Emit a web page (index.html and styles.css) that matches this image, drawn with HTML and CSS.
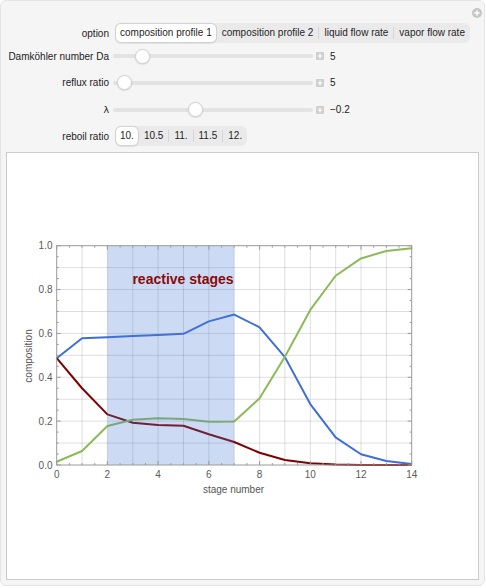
FILE: index.html
```html
<!DOCTYPE html>
<html>
<head>
<meta charset="utf-8">
<link rel="stylesheet" href="styles.css">
</head>
<body>
<div class="panel">
  <span class="corner-add"><svg width="10" height="10" viewBox="0 0 10 10"><circle cx="5" cy="5" r="5" fill="#c6c6c6"/><path d="M5 2.3v5.4M2.3 5h5.4" stroke="#fff" stroke-width="1.4"/></svg></span>
  <div class="controls">
    <div class="row row-option">
      <span class="label">option</span>
      <div class="seg">
        <span class="seg-item active">composition profile 1</span>
        <span class="seg-item">composition profile 2</span>
        <span class="sep"></span>
        <span class="seg-item">liquid flow rate</span>
        <span class="sep"></span>
        <span class="seg-item">vapor flow rate</span>
      </div>
    </div>
    <div class="row">
      <span class="label">Damköhler number Da</span>
      <div class="slider"><div class="track"></div><div class="thumb" style="left:21.5px"></div></div>
      <span class="plus"><svg width="8" height="8" viewBox="0 0 8 8"><rect width="8" height="8" rx="1" fill="#cfcfcf"/><path d="M4 1.6v4.8M1.6 4h4.8" stroke="#fff" stroke-width="1.2"/></svg></span>
      <span class="value">5</span>
    </div>
    <div class="row">
      <span class="label">reflux ratio</span>
      <div class="slider"><div class="track"></div><div class="thumb" style="left:3.5px"></div></div>
      <span class="plus"><svg width="8" height="8" viewBox="0 0 8 8"><rect width="8" height="8" rx="1" fill="#cfcfcf"/><path d="M4 1.6v4.8M1.6 4h4.8" stroke="#fff" stroke-width="1.2"/></svg></span>
      <span class="value">5</span>
    </div>
    <div class="row">
      <span class="label lambda">λ</span>
      <div class="slider"><div class="track"></div><div class="thumb" style="left:74.5px"></div></div>
      <span class="plus"><svg width="8" height="8" viewBox="0 0 8 8"><rect width="8" height="8" rx="1" fill="#cfcfcf"/><path d="M4 1.6v4.8M1.6 4h4.8" stroke="#fff" stroke-width="1.2"/></svg></span>
      <span class="value">−0.2</span>
    </div>
    <div class="row">
      <span class="label">reboil ratio</span>
      <div class="seg">
        <span class="seg-item active">10.</span>
        <span class="seg-item">10.5</span>
        <span class="sep"></span>
        <span class="seg-item">11.</span>
        <span class="sep"></span>
        <span class="seg-item">11.5</span>
        <span class="sep"></span>
        <span class="seg-item">12.</span>
      </div>
    </div>
  </div>
  <div class="plot">
    <svg class="chart" width="471" height="426" viewBox="7 153 471 426">
      <g class="grid">
        <path d="M82.06 245.7V465M107.4 245.7V465M132.8 245.7V465M158.1 245.7V465M183.5 245.7V465M208.9 245.7V465M234.2 245.7V465M259.6 245.7V465M284.9 245.7V465M310.3 245.7V465M335.7 245.7V465M361 245.7V465M386.4 245.7V465"/>
        <path d="M56.7 443.07H411.7M56.7 421.14H411.7M56.7 399.21H411.7M56.7 377.28H411.7M56.7 355.35H411.7M56.7 333.4H411.7M56.7 311.5H411.7M56.7 289.56H411.7M56.7 267.6H411.7"/>
      </g>
      <g class="curves" transform="translate(56.7 465) scale(25.357 -219.3)">
        <polyline class="c-blue" points="0,0.487 1,0.578 2,0.582 3,0.588 4,0.593 5,0.598 6,0.655 7,0.686 8,0.628 9,0.492 10,0.278 11,0.126 12,0.049 13,0.018 14,0.005"/>
        <polyline class="c-red" points="0,0.487 1,0.35 2,0.231 3,0.193 4,0.182 5,0.179 6,0.14 7,0.105 8,0.056 9,0.023 10,0.008 11,0.002 12,0 13,0 14,0"/>
        <polyline class="c-green" points="0,0.015 1,0.064 2,0.178 3,0.206 4,0.213 5,0.21 6,0.197 7,0.198 8,0.304 9,0.494 10,0.707 11,0.863 12,0.942 13,0.976 14,0.988"/>
      </g>
      <rect class="shade" x="107.4" y="245.7" width="126.8" height="219.3"/>
      <text class="annot" x="183" y="284" text-anchor="middle">reactive stages</text>
      <rect class="frame" x="56.7" y="245.7" width="355" height="219.3"/>
      <g class="ticks">
        <g id="yt">
          <path d="M56.7 465h4M56.7 421.14h4M56.7 377.28h4M56.7 333.4h4M56.7 289.56h4M56.7 245.7h4M56.7 454.04h2M56.7 443.07h2M56.7 432.1h2M56.7 410.18h2M56.7 399.21h2M56.7 388.25h2M56.7 366.3h2M56.7 355.35h2M56.7 344.4h2M56.7 322.45h2M56.7 311.5h2M56.7 300.5h2M56.7 278.6h2M56.7 267.6h2M56.7 256.7h2"/>
        </g>
        <use href="#yt" transform="translate(468.4 0) scale(-1 1)"/>
        <g id="xt">
          <path d="M56.7 465v-4M107.4 465v-4M158.1 465v-4M208.9 465v-4M259.6 465v-4M310.3 465v-4M361 465v-4M411.7 465v-4M69.4 465v-2M82.06 465v-2M94.74 465v-2M120.1 465v-2M132.8 465v-2M145.5 465v-2M170.8 465v-2M183.5 465v-2M196.2 465v-2M221.6 465v-2M234.2 465v-2M246.9 465v-2M272.3 465v-2M284.9 465v-2M297.6 465v-2M323 465v-2M335.7 465v-2M348.3 465v-2M373.7 465v-2M386.4 465v-2M399 465v-2"/>
        </g>
        <use href="#xt" transform="translate(0 710.7) scale(1 -1)"/>
      </g>
      <g class="ylabels">
        <text x="52.5" y="468.5">0.0</text>
        <text x="52.5" y="424.6">0.2</text>
        <text x="52.5" y="380.8">0.4</text>
        <text x="52.5" y="336.9">0.6</text>
        <text x="52.5" y="293">0.8</text>
        <text x="52.5" y="249.2">1.0</text>
      </g>
      <g class="xlabels">
        <text x="56.7" y="477.5">0</text>
        <text x="107.4" y="477.5">2</text>
        <text x="158.1" y="477.5">4</text>
        <text x="208.9" y="477.5">6</text>
        <text x="259.6" y="477.5">8</text>
        <text x="310.3" y="477.5">10</text>
        <text x="361" y="477.5">12</text>
        <text x="411.7" y="477.5">14</text>
      </g>
      <text class="axis-title" x="233.5" y="493" text-anchor="middle">stage number</text>
      <text class="axis-title" transform="translate(31.5 356) rotate(-90)" text-anchor="middle">composition</text>
    </svg>
  </div>
</div>
</body>
</html>
```
FILE: styles.css
```css
* { box-sizing: border-box; }

body {
  margin: 0;
  background: #ffffff;
  font-family: "Liberation Sans", Arial, sans-serif;
  font-size: 10px;
  color: #222;
}

.panel {
  position: relative;
  width: 485px;
  height: 586px;
  background: #f5f5f5;
  border: 1px solid #e4e4e4;
  border-radius: 6px;
}

.corner-add {
  position: absolute;
  left: 471px;
  top: 7px;
  width: 10px;
  height: 10px;
  display: block;
}
.corner-add svg { display: block; }

.controls {
  padding-top: 22px;
}

.row {
  display: flex;
  align-items: center;
  height: 26.67px;
}

.row-option {
  height: 20px;
}

.label {
  flex: none;
  width: 108px;
  text-align: right;
  color: #222;
  white-space: nowrap;
}

.lambda {
  font-family: "DejaVu Sans", "Liberation Sans", sans-serif;
  font-size: 9.5px;
}

.seg {
  margin-left: 6px;
  display: flex;
  align-items: center;
  height: 20px;
  background: #eaeaea;
  border-radius: 6px;
}

.seg-item {
  padding: 0 5px;
  line-height: 18px;
  white-space: nowrap;
  color: #1e1e1e;
}

.seg-item.active {
  height: 20px;
  padding: 0 4px;
  background: #ffffff;
  border: 1px solid #d2d2d2;
  border-radius: 6px;
  box-shadow: 0 0.5px 1px rgba(0, 0, 0, 0.08);
}

.sep {
  width: 1px;
  height: 12px;
  background: #d6d6d6;
}

.slider {
  position: relative;
  margin-left: 4px;
  width: 200px;
  height: 16px;
  display: flex;
  align-items: center;
}

.track {
  flex: 1;
  height: 4px;
  background: #e3e3e3;
  border-radius: 2px;
}

.thumb {
  position: absolute;
  top: 0.5px;
  width: 15px;
  height: 15px;
  border-radius: 50%;
  background: #ffffff;
  border: 0.5px solid #d4d4d4;
  box-shadow: 0 0.5px 1.5px rgba(0, 0, 0, 0.18);
}

.plus {
  margin-left: 3px;
  width: 8px;
  height: 8px;
}
.plus svg { display: block; }

.value {
  margin-left: 6px;
  color: #222;
}

.plot {
  margin: 2px 0 0 5px;
  width: 473px;
  height: 428px;
  background: #ffffff;
  border: 1px solid #cbcbcb;
}

.chart {
  display: block;
  font-family: "Liberation Sans", Arial, sans-serif;
}

.grid path {
  stroke: rgba(0, 0, 0, 0.13);
  stroke-width: 1;
  fill: none;
}

.curves polyline {
  fill: none;
  stroke-width: 2;
  stroke-linejoin: round;
  vector-effect: non-scaling-stroke;
}

.c-blue { stroke: #3e6fd8; }
.c-red { stroke: #800000; }
.c-green { stroke: #8cba59; }

.shade {
  fill: rgba(70, 120, 210, 0.27);
}

.annot {
  font-size: 14px;
  font-weight: bold;
  fill: #8a0a0a;
}

.frame {
  fill: none;
  stroke: #9a9a9a;
  stroke-width: 1;
}

.ticks path {
  stroke: #9a9a9a;
  stroke-width: 1;
  fill: none;
}

.ylabels text {
  font-size: 10px;
  fill: #5a5a5a;
  text-anchor: end;
}

.xlabels text {
  font-size: 10px;
  fill: #5a5a5a;
  text-anchor: middle;
}

.axis-title {
  font-size: 10px;
  fill: #555;
}
```
